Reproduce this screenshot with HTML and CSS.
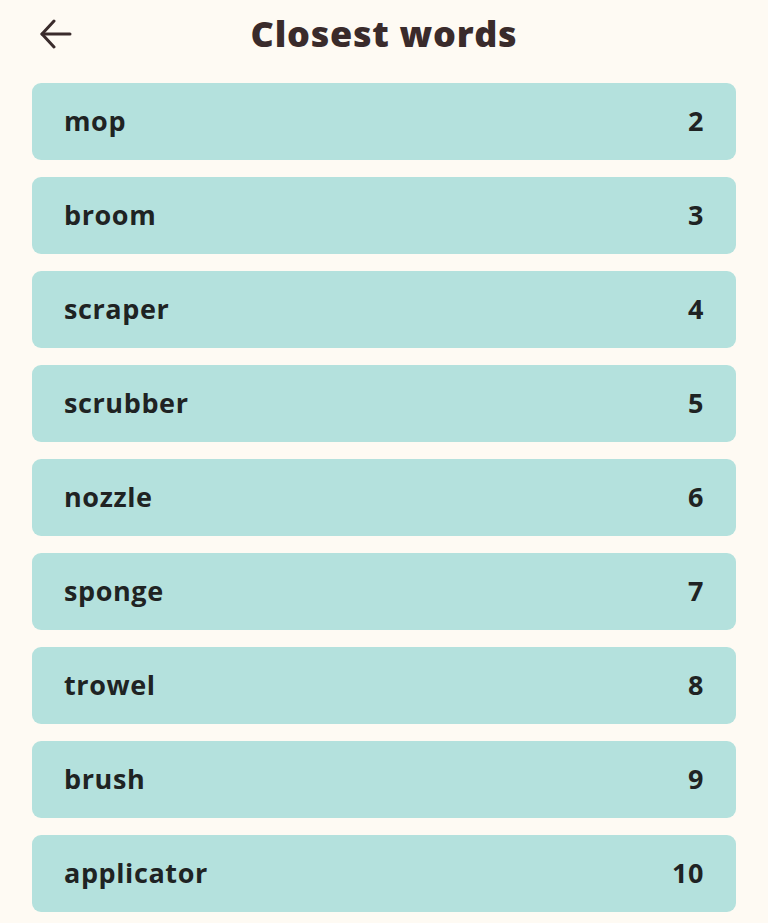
FILE: index.html
```html
<!DOCTYPE html>
<html lang="en">

<head>
  <meta charset="UTF-8">
  <meta name="viewport" content="width=device-width, initial-scale=1.0">
  <title>Closest words</title>
  <link rel="stylesheet" href="styles.css">
</head>

<body>
  <div class="screen">
    <header class="top-bar">
      <button class="back-button" type="button" aria-label="Back">
        <svg width="34" height="30" viewBox="0 0 34 30" fill="none" stroke="#3a2b2b" stroke-width="3" stroke-linecap="round" stroke-linejoin="round">
          <path d="M3 15 H31" />
          <path d="M15 2 L3 15 L15 28" />
        </svg>
      </button>
      <h1 class="title">Closest words</h1>
    </header>

    <ul class="word-list">
      <li class="word-card"><span class="word">mop</span><span class="rank">2</span></li>
      <li class="word-card"><span class="word">broom</span><span class="rank">3</span></li>
      <li class="word-card"><span class="word">scraper</span><span class="rank">4</span></li>
      <li class="word-card"><span class="word">scrubber</span><span class="rank">5</span></li>
      <li class="word-card"><span class="word">nozzle</span><span class="rank">6</span></li>
      <li class="word-card"><span class="word">sponge</span><span class="rank">7</span></li>
      <li class="word-card"><span class="word">trowel</span><span class="rank">8</span></li>
      <li class="word-card"><span class="word">brush</span><span class="rank">9</span></li>
      <li class="word-card"><span class="word">applicator</span><span class="rank">10</span></li>
    </ul>
  </div>
</body>

</html>
```

FILE: styles.css
```css
body {
  margin: 0;
  padding: 0;
  background-color: #fefaf3;
  font-family: "Open Sans", "Noto Sans", sans-serif;
  color: #1f2323;
}

.screen {
  padding: 0 32px;
}

.top-bar {
  position: relative;
  height: 66px;
  display: flex;
  align-items: center;
  justify-content: center;
  margin-bottom: 17px;
}

.back-button {
  position: absolute;
  left: 7px;
  top: 19px;
  padding: 0;
  border: none;
  background: none;
  cursor: pointer;
  display: flex;
}

.title {
  margin: 0;
  font-size: 36px;
  font-weight: 800;
  color: #3a2b2b;
  letter-spacing: 0.7px;
}

.word-list {
  list-style: none;
  margin: 0;
  padding: 0;
  display: flex;
  flex-direction: column;
  gap: 17px;
}

.word-card {
  height: 77px;
  box-sizing: border-box;
  display: flex;
  align-items: center;
  justify-content: space-between;
  padding: 0 32px 2px;
  background-color: #b4e1dd;
  border-radius: 9px;
  font-size: 27px;
  font-weight: 700;
  letter-spacing: 0.6px;
}
```
